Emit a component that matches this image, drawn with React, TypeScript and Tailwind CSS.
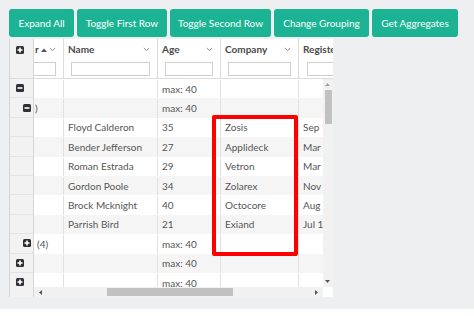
import React from 'react';

type Row = {
  pin?: 'plus' | 'minus';
  indent?: boolean;
  group?: string;
  name?: string;
  age?: string;
  company?: string;
  reg?: string;
};

const rows: Row[] = [
  { pin: 'minus', age: 'max: 40' },
  { pin: 'minus', indent: true, group: ')', age: 'max: 40' },
  { name: 'Floyd Calderon', age: '35', company: 'Zosis', reg: 'Sep 13, 2014' },
  { name: 'Bender Jefferson', age: '27', company: 'Applideck', reg: 'Mar 3, 2015' },
  { name: 'Roman Estrada', age: '29', company: 'Vetron', reg: 'Mar 27, 2016' },
  { name: 'Gordon Poole', age: '34', company: 'Zolarex', reg: 'Nov 2, 2014' },
  { name: 'Brock Mcknight', age: '40', company: 'Octocore', reg: 'Aug 9, 2015' },
  { name: 'Parrish Bird', age: '21', company: 'Exiand', reg: 'Jul 14, 2016' },
  { pin: 'plus', indent: true, group: '(4)', age: 'max: 40' },
  { pin: 'plus', age: 'max: 40' },
  { pin: 'plus', age: 'max: 40' },
];

const buttons = [
  { label: 'Expand All', w: 'w-[65px]' },
  { label: 'Toggle First Row', w: 'w-[90px]' },
  { label: 'Toggle Second Row', w: 'w-[101px]' },
  { label: 'Change Grouping', w: 'w-[95px]' },
  { label: 'Get Aggregates', w: 'w-[86px]' },
];

function ToggleIcon({ kind }: { kind: 'plus' | 'minus' }) {
  return (
    <svg width="8" height="8" viewBox="0 0 8 8">
      <rect x="0" y="0" width="8" height="8" rx="1.5" fill="#2f3033" />
      <rect x="1.5" y="3.2" width="5" height="1.6" fill="#fff" />
      {kind === 'plus' && <rect x="3.2" y="1.5" width="1.6" height="5" fill="#fff" />}
    </svg>
  );
}

function Chevron() {
  return (
    <svg width="7" height="5" viewBox="0 0 7 5">
      <path d="M0.8 1 L3.5 3.6 L6.2 1" fill="none" stroke="#8a8a8a" strokeWidth="1" />
    </svg>
  );
}

function SortUp() {
  return (
    <svg width="6" height="4" viewBox="0 0 6 4">
      <path d="M0 4 L3 0.5 L6 4 Z" fill="#555" />
    </svg>
  );
}

function HeaderCell({ label, w }: { label: string; w: string }) {
  return (
    <div className={`${w} h-full shrink-0 overflow-hidden flex flex-col border-r border-[#dcdcdc]`}>
      <div className="h-[20px] flex items-center justify-between pl-[4px] pr-[7px] pt-[1px]">
        <span className="text-[10px] font-bold text-[#4a4a4a] whitespace-nowrap">{label}</span>
        <Chevron />
      </div>
      <div className="mt-[3px] mx-[7px] h-[14px] border border-[#cfcfcf] bg-white shrink-0" />
    </div>
  );
}

export default function App() {
  return (
    <div className="relative w-[474px] h-[316px] bg-white font-['Lato',sans-serif] overflow-hidden">
      <div className="bg-[#edeff1] px-[9px] pt-[9px] h-[309px]">
        {/* Toolbar */}
        <div className="flex gap-[3px]">
          {buttons.map((b) => (
            <button
              key={b.label}
              className={`${b.w} h-[28px] rounded-[3px] bg-[#1bb394] text-white text-[10px] whitespace-nowrap flex items-center justify-center`}
            >
              {b.label}
            </button>
          ))}
        </div>

        {/* Grid */}
        <div className="mt-[2px] flex w-[324px] h-[258px]">
          {/* Pinned column */}
          <div className="w-[25px] h-full flex flex-col border-l border-r border-[#d6d6d6] bg-[#f2f2f2]">
            <div className="h-[40px] shrink-0 border-b border-[#dcdcdc] pl-[6px] pt-[7px]">
              <ToggleIcon kind="plus" />
            </div>
            <div className="h-[208px] overflow-hidden">
              {rows.map((r, i) => (
                <div
                  key={i}
                  className={`h-[19.4px] flex items-center border-b border-[#e4e4e4] ${r.indent ? 'pl-[13px]' : 'pl-[6px]'}`}
                >
                  {r.pin && <ToggleIcon kind={r.pin} />}
                </div>
              ))}
            </div>
            <div className="flex-1" />
          </div>

          {/* Main area */}
          <div className="w-[299px] h-full flex flex-col">
            {/* Header */}
            <div className="h-[40px] shrink-0 flex bg-white border-b border-[#dcdcdc]">
              <div className="w-[30px] h-full shrink-0 overflow-hidden flex flex-col border-r border-[#dcdcdc]">
                <div className="h-[20px] flex items-center pl-[1px] pr-[7px] pt-[1px]">
                  <span className="text-[10px] font-bold text-[#4a4a4a]">r</span>
                  <div className="flex-1" />
                  <div className="flex items-center gap-[2px]">
                    <SortUp />
                    <Chevron />
                  </div>
                </div>
                <div className="mt-[3px] -ml-[10px] mr-[7px] h-[14px] border border-[#cfcfcf] bg-white shrink-0" />
              </div>
              <HeaderCell label="Name" w="w-[94px]" />
              <HeaderCell label="Age" w="w-[63px]" />
              <HeaderCell label="Company" w="w-[78px]" />
              <div className="flex-1 h-full overflow-hidden flex flex-col">
                <div className="h-[20px] flex items-center pl-[4px] pt-[1px]">
                  <span className="text-[10px] font-bold text-[#4a4a4a] whitespace-nowrap">Registered</span>
                </div>
                <div className="mt-[3px] ml-[8px] w-[80px] h-[14px] border border-[#cfcfcf] bg-white shrink-0" />
              </div>
            </div>

            {/* Body */}
            <div className="h-[208px] flex">
              <div className="w-[289px] h-full overflow-hidden">
                {rows.map((r, i) => (
                  <div
                    key={i}
                    className={`h-[19.4px] flex pt-[1px] text-[10px] text-[#555] ${i % 2 === 1 ? 'bg-[#f5f5f5]' : 'bg-white'}`}
                  >
                    <div className={`w-[30px] shrink-0 border-r border-[#e0e0e0] flex items-center whitespace-nowrap overflow-hidden ${r.group === '(4)' ? 'pl-[3px]' : 'pl-[1px]'}`}>
                      {r.group}
                    </div>
                    <div className="w-[94px] shrink-0 border-r border-[#e0e0e0] flex items-center px-[4px] whitespace-nowrap overflow-hidden">
                      {r.name}
                    </div>
                    <div className="w-[63px] shrink-0 border-r border-[#e0e0e0] flex items-center px-[4px] whitespace-nowrap overflow-hidden">
                      {r.age}
                    </div>
                    <div className="w-[78px] shrink-0 border-r border-[#e0e0e0] flex items-center px-[4px] whitespace-nowrap overflow-hidden">
                      {r.company}
                    </div>
                    <div className="flex-1 flex items-center pl-[4px] whitespace-nowrap overflow-hidden">
                      {r.reg}
                    </div>
                  </div>
                ))}
              </div>
              {/* Vertical scrollbar */}
              <div className="relative w-[10px] h-full bg-[#f1f1f1]">
                <svg className="absolute left-[2px] top-[4px]" width="5" height="3" viewBox="0 0 5 3">
                  <path d="M0 3 L2.5 0 L5 3 Z" fill="#a3a3a3" />
                </svg>
                <div className="absolute left-[1.5px] top-[11px] w-[7px] h-[34px] bg-[#c1c1c1]" />
                <svg className="absolute left-[2px] bottom-[4px]" width="5" height="3" viewBox="0 0 5 3">
                  <path d="M0 0 L2.5 3 L5 0 Z" fill="#555" />
                </svg>
              </div>
            </div>

            {/* Horizontal scrollbar */}
            <div className="h-[10px] flex">
              <div className="relative w-[289px] h-full bg-[#f1f1f1]">
                <svg className="absolute left-[5px] top-[3px]" width="3" height="5" viewBox="0 0 3 5">
                  <path d="M3 0 L0 2.5 L3 5 Z" fill="#555" />
                </svg>
                <div className="absolute left-[73px] top-[1px] w-[126px] h-[8px] bg-[#c1c1c1]" />
                <svg className="absolute right-[5px] top-[3px]" width="3" height="5" viewBox="0 0 3 5">
                  <path d="M0 0 L3 2.5 L0 5 Z" fill="#555" />
                </svg>
              </div>
              <div className="w-[10px] h-full bg-white" />
            </div>
          </div>
        </div>
      </div>

      {/* Highlight box */}
      <div className="absolute left-[212px] top-[115px] w-[86px] h-[141px] border-4 border-[#ff0000] rounded-[2px] pointer-events-none" />
    </div>
  );
}
